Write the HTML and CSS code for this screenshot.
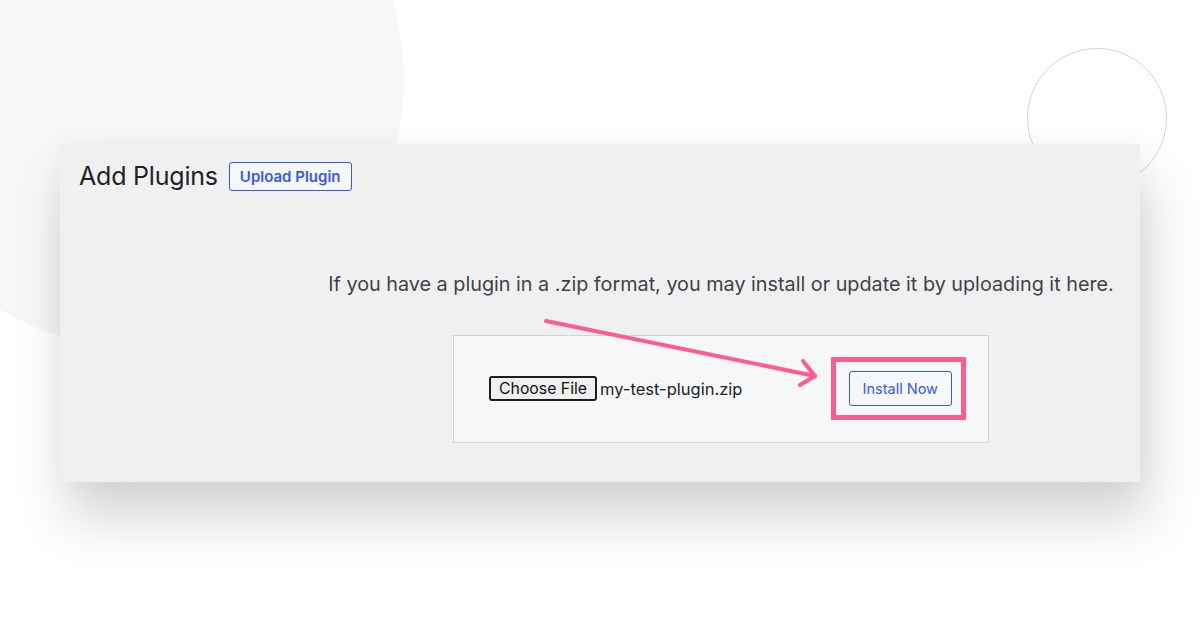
FILE: index.html
```html
<!DOCTYPE html>
<html lang="en">
<head>
<meta charset="utf-8">
<title>Add Plugins</title>
<link rel="stylesheet" href="styles.css">
</head>
<body>
<div class="stage">
  <div class="blob"></div>
  <div class="ring"></div>
  <div class="panel">
    <div class="header">
      <h1 class="title">Add Plugins</h1>
      <span class="upload-btn">Upload Plugin</span>
    </div>
    <div class="upload">
      <p class="help">If you have a plugin in a .zip format, you may install or update it by uploading it here.</p>
      <div class="filebox">
        <div class="file">
          <span class="choose">Choose File</span>
          <span class="fname">my-test-plugin.zip</span>
        </div>
        <div class="highlight">
          <span class="install">Install Now</span>
        </div>
      </div>
    </div>
    <svg class="arrow" width="300" height="80" viewBox="0 0 300 80" aria-hidden="true">
      <g fill="none" stroke="#ff5a92" stroke-width="4" stroke-linecap="round" stroke-linejoin="round">
        <path d="M6 13 L275 68"/>
        <path d="M263 53 L275 68 L260 77"/>
      </g>
    </svg>
  </div>
</div>
</body>
</html>
```

FILE: styles.css
```css
* { box-sizing: border-box; }
html, body { margin: 0; padding: 0; }
body {
  width: 1200px;
  height: 628px;
  overflow: hidden;
  background: #ffffff;
  font-family: Inter, "Liberation Sans", Arial, sans-serif;
}
.stage {
  position: relative;
  width: 1200px;
  height: 628px;
  padding: 144px 60px 0 60px;
}
.blob {
  position: absolute;
  left: -131px;
  top: -188px;
  width: 535px;
  height: 535px;
  border-radius: 50%;
  background: #f7f7f7;
}
.ring {
  position: absolute;
  left: 1027px;
  top: 48px;
  width: 140px;
  height: 140px;
  border-radius: 50%;
  border: 1px solid #d4d4d4;
  background: #ffffff;
}
.panel {
  position: relative;
  width: 1080px;
  height: 338px;
  background: #f0f0f1;
  box-shadow: 8px 36px 50px rgba(0, 0, 0, 0.17), 0 0 24px rgba(0, 0, 0, 0.04);
  padding: 17px 0 0 19px;
}
.header {
  display: flex;
  align-items: center;
  gap: 11px;
}
.title {
  margin: 0;
  font-size: 25px;
  font-weight: 400;
  color: #1d2327;
  letter-spacing: -0.2px;
  line-height: 30px;
}
.upload-btn {
  display: inline-flex;
  align-items: center;
  height: 29px;
  padding: 0 10px;
  border: 1px solid #3858e9;
  border-radius: 3px;
  background: #f6f7f7;
  color: #3858e9;
  font-size: 15px;
  font-weight: 600;
}
.upload {
  display: flex;
  flex-direction: column;
  align-items: center;
  margin: 80px 26px 0 249px;
}
.help {
  margin: 0;
  font-size: 19.8px;
  color: #3c434a;
  line-height: 26px;
  white-space: nowrap;
}
.filebox {
  margin-top: 38px;
  width: 536px;
  display: flex;
  align-items: center;
  justify-content: space-between;
  padding: 21px 22px 22px 35px;
  background: #f6f7f7;
  border: 1px solid #d3d4d7;
}
.file {
  display: flex;
  align-items: center;
  gap: 3px;
}
.choose {
  display: inline-flex;
  align-items: center;
  height: 25px;
  padding: 0 8px;
  border: 2px solid #1e1e1e;
  border-radius: 3px;
  background: #efefef;
  color: #111;
  font-size: 15.8px;
}
.fname {
  font-size: 16.5px;
  color: #1d2327;
}
.highlight {
  border: 5px solid #ff5a92;
  padding: 9px 9px 9px 13px;
}
.install {
  display: inline-flex;
  align-items: center;
  height: 35px;
  padding: 0 13px;
  border: 1px solid #3858e9;
  border-radius: 3px;
  background: #f6f7f7;
  color: #3858e9;
  font-size: 14.5px;
}
.arrow {
  position: absolute;
  left: 480px;
  top: 164px;
}
```
